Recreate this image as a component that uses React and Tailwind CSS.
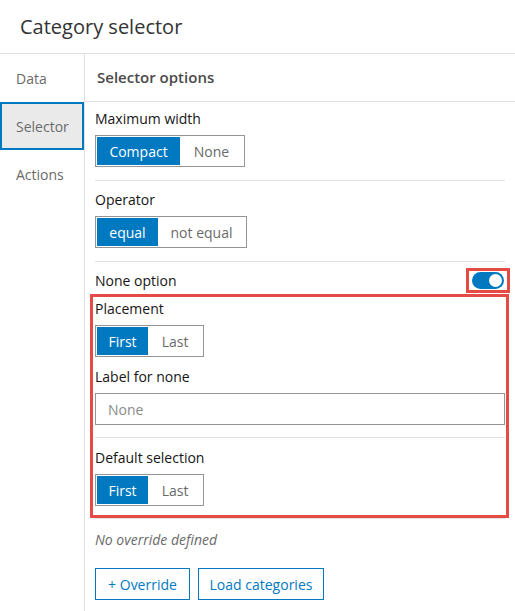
import React, { useState } from 'react';

const font = { fontFamily: '"Open Sans", "Liberation Sans", sans-serif' };

// segmented control, sizes taken from the picture
const Segmented = ({ options, value, onChange }) => (
  <div className="flex w-fit border border-[#959595] p-px">
    {options.map((o) => (
      <button
        key={o.label}
        onClick={() => onChange(o.label)}
        className={`${o.w} h-[28px] text-[14px] flex items-center justify-center ${
          value === o.label ? 'bg-[#0079c1] text-white' : 'bg-white text-[#6a6a6a]'
        }`}
      >
        {o.label}
      </button>
    ))}
  </div>
);

const Label = ({ children, className = '' }) => (
  <div className={`text-[14px] leading-[20px] text-[#151515] ${className}`}>{children}</div>
);

const App = () => {
  const [width, setWidth] = useState('Compact');
  const [operator, setOperator] = useState('equal');
  const [placement, setPlacement] = useState('First');
  const [defaultSel, setDefaultSel] = useState('First');
  const [noneOn, setNoneOn] = useState(true);
  const [tab, setTab] = useState('Selector');

  return (
    <div style={font} className="w-[515px] h-[611px] bg-white overflow-hidden">
      {/* Header */}
      <div className="h-[54px] border-b border-[#e0e0e0] px-5 flex items-center text-[20px] text-[#323232]">
        Category selector
      </div>

      <div className="flex h-[557px]">
        {/* Side tabs */}
        <div className="w-[85px] shrink-0 border-r border-[#e0e0e0]">
          {['Data', 'Selector', 'Actions'].map((t) => (
            <button
              key={t}
              onClick={() => setTab(t)}
              className={`w-[84px] h-[48px] flex items-center text-[14px] text-[#6a6a6a] ${
                tab === t ? 'bg-[#eaeaea] border-2 border-[#0079c1] pl-[14px]' : 'pl-4'
              }`}
            >
              {t}
            </button>
          ))}
        </div>

        {/* Panel */}
        <div className="flex-1 min-w-0">
          <div className="h-[48px] border-b border-[#e0e0e0] pl-3 flex items-center text-[15px] font-semibold text-[#4a4a4a]">
            Selector options
          </div>

          <div className="px-[10px]">
            {/* Maximum width */}
            <div className="pt-[7px] pb-[13px] border-b border-[#e0e0e0]">
              <Label className="mb-[6px]">Maximum width</Label>
              <Segmented
                value={width}
                onChange={setWidth}
                options={[
                  { label: 'Compact', w: 'w-[83px]' },
                  { label: 'None', w: 'w-[63px]' },
                ]}
              />
            </div>

            {/* Operator */}
            <div className="pt-[9px] pb-[13px] border-b border-[#e0e0e0]">
              <Label className="mb-[6px]">Operator</Label>
              <Segmented
                value={operator}
                onChange={setOperator}
                options={[
                  { label: 'equal', w: 'w-[61px]' },
                  { label: 'not equal', w: 'w-[87px]' },
                ]}
              />
            </div>

            {/* None option */}
            <div className="flex items-center justify-between pt-[6px]">
              <Label>None option</Label>
              <div className="border-[3px] border-[#e64a45] px-[3px] py-px -mr-[5px]">
                <button
                  onClick={() => setNoneOn(!noneOn)}
                  className={`w-[32px] h-[17px] rounded-full flex items-center px-[2px] ${
                    noneOn ? 'bg-[#0079c1] justify-end' : 'bg-[#b0b0b0] justify-start'
                  }`}
                >
                  <span className="w-[13px] h-[13px] rounded-full bg-white" />
                </button>
              </div>
            </div>

            {/* highlighted group */}
            <div className="mt-px -ml-[5px] -mr-[4px] border-[3px] border-[#e64a45] pl-[2px] pr-[1px] pb-[9px]">
              <Label className="mt-[2px] mb-[6px]">Placement</Label>
              <Segmented
                value={placement}
                onChange={setPlacement}
                options={[
                  { label: 'First', w: 'w-[51px]' },
                  { label: 'Last', w: 'w-[54px]' },
                ]}
              />
              <Label className="mt-[10px] mb-[6px]">Label for none</Label>
              <input
                placeholder="None"
                className="block w-full h-[32px] border border-[#959595] px-[12px] text-[14px] text-[#151515] placeholder:text-[#8a8a8a] outline-none"
              />
              <div className="mt-[12px] border-t border-[#e0e0e0]" />
              <Label className="mt-[10px] mb-[6px]">Default selection</Label>
              <Segmented
                value={defaultSel}
                onChange={setDefaultSel}
                options={[
                  { label: 'First', w: 'w-[51px]' },
                  { label: 'Last', w: 'w-[54px]' },
                ]}
              />
            </div>

            <div className="border-t border-[#e0e0e0]" />
            <div className="mt-[11px] text-[14px] leading-[20px] italic text-[#6a6a6a]">
              No override defined
            </div>

            {/* Buttons */}
            <div className="mt-[18px] flex gap-2">
              <button className="h-[32px] w-[95px] border border-[#0079c1] text-[#0079c1] text-[14px]">
                + Override
              </button>
              <button className="h-[32px] w-[126px] border border-[#0079c1] text-[#0079c1] text-[14px]">
                Load categories
              </button>
            </div>
          </div>
        </div>
      </div>
    </div>
  );
};

export default App;
